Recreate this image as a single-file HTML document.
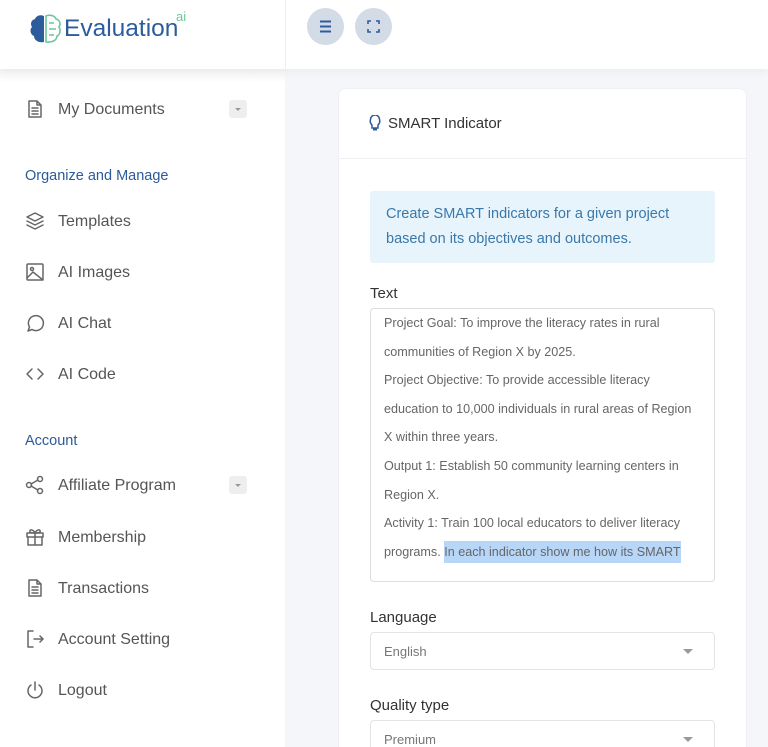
<!DOCTYPE html>
<html><head><meta charset="utf-8"><style>
*{box-sizing:border-box;margin:0;padding:0}
html,body{width:768px;height:747px;overflow:hidden}
body{background:#f5f6fa;font-family:"Liberation Sans",sans-serif;position:relative}
.top{position:absolute;left:0;top:0;width:768px;height:69px;background:#fff;box-shadow:0 2px 10px rgba(0,0,0,.05);z-index:2}
.side{position:absolute;left:0;top:69px;width:285px;height:678px;background:linear-gradient(#f3f3f3,#fff 14px)}
.vline{position:absolute;left:285px;top:0;width:1px;height:69px;background:#eee;z-index:3}
.item{position:absolute;left:25px;height:22px;display:flex;align-items:center;color:#555;font-size:16px;line-height:22px}
.item svg{display:block;width:20px;height:20px;margin-right:13px;margin-top:-3px;stroke:#666;fill:none;stroke-width:1.5;stroke-linecap:round;stroke-linejoin:round}
.sec{position:absolute;left:25px;color:#2b5a98;font-size:14.5px}
.dd{position:absolute;left:229px;width:18px;height:18px;background:#eee;border-radius:3px}
.dd:after{content:"";position:absolute;left:6px;top:8px;border:3px solid transparent;border-top-color:#999}
.btn{position:absolute;top:8px;width:37px;height:37px;border-radius:50%;background:#d3dbe7;z-index:3}
.btn svg{display:block}
.card{position:absolute;left:338px;top:88px;width:409px;height:680px;background:#fff;border-radius:8px;border:1px solid #eef0f4}
.lbl{position:absolute;left:370px;font-size:15px;color:#333}
.sel{position:absolute;left:370px;width:345px;height:38px;border:1px solid #e3e3e3;border-radius:4px;background:#fff;font-size:13px;color:#777;padding:11px 13px}
.sel:after{content:"";position:absolute;right:21px;top:16px;border:5px solid transparent;border-top-color:#999}
.z{position:absolute;z-index:3}
</style></head><body>
<div class="top"></div>
<div class="vline"></div>
<svg class="z" style="left:28px;top:13px" width="34" height="32" viewBox="0 0 34 32">
<path d="M16 3C12 1 8 3 7 6C3 7 2 11 4 14C1 17 3 22 6 23C6 27 10 30 16 29Z" fill="#2c5c9c"/>
<path d="M18 3C22 1 27 3 28 6C32 7 33 11 31 14C33 17 32 22 29 23C29 27 24 30 18 29Z" fill="none" stroke="#6cc79a" stroke-width="1.6"/>
<path d="M21 10h5M21 16h7M21 22h5" stroke="#6cc79a" stroke-width="1.4"/>
</svg>
<div class="z" style="left:64px;top:15px;font-size:24.5px;color:#2c5c9c">Evaluation</div>
<div class="z" style="left:176px;top:9px;font-size:13px;color:#6cc79a">ai</div>
<div class="btn" style="left:307px"><svg width="37" height="37" viewBox="0 0 37 37"><path d="M13 13.5h11M13 18.5h11M13 23.5h11" stroke="#2c5c9c" stroke-width="2"/></svg></div>
<div class="btn" style="left:355px"><svg width="37" height="37" viewBox="0 0 37 37" fill="none" stroke="#2c5c9c" stroke-width="1.6"><path d="M13 16v-3h3M21 13h3v3M24 21v3h-3M16 24h-3v-3"/></svg></div>
<div class="side"></div>

<div class="item" style="top:99px"><svg viewBox="0 0 20 20"><path d="M4 2h8l4 4v12H4z M12 2v4h4 M7 9h6M7 12h6M7 15h6"/></svg>My Documents</div>
<div class="dd" style="top:100px"></div>
<div class="sec" style="top:168px">Organize and Manage</div>
<div class="item" style="top:211px"><svg viewBox="0 0 20 20"><path d="M10 2l8 4-8 4-8-4z M2 10l8 4 8-4 M2 14l8 4 8-4"/></svg>Templates</div>
<div class="item" style="top:262px"><svg viewBox="0 0 20 20"><rect x="2" y="2" width="16" height="16" rx="1"/><circle cx="7" cy="7" r="1.5"/><path d="M2 16l6-6 10 8"/></svg>AI Images</div>
<div class="item" style="top:313px"><svg viewBox="0 0 20 20"><path d="M3 18l1.5-4A7.5 7.5 0 1 1 7 16.5z"/></svg>AI Chat</div>
<div class="item" style="top:364px"><svg viewBox="0 0 20 20"><path d="M7 5l-5 5 5 5M13 5l5 5-5 5"/></svg>AI Code</div>
<div class="sec" style="top:433px">Account</div>
<div class="item" style="top:475px"><svg viewBox="0 0 20 20"><circle cx="4" cy="10" r="2.5"/><circle cx="15" cy="4" r="2.5"/><circle cx="15" cy="16" r="2.5"/><path d="M6 9l7-4M6 11l7 4"/></svg>Affiliate Program</div>
<div class="dd" style="top:476px"></div>
<div class="item" style="top:527px"><svg viewBox="0 0 20 20"><rect x="2" y="6" width="16" height="4"/><path d="M3 10v8h14v-8M10 6v12M10 6C8 2 4 2 5 5c1 1 5 1 5 1c0 0 4 0 5-1c1-3-3-3-5 1"/></svg>Membership</div>
<div class="item" style="top:578px"><svg viewBox="0 0 20 20"><path d="M4 2h8l4 4v12H4z M12 2v4h4 M7 9h6M7 12h6M7 15h6"/></svg>Transactions</div>
<div class="item" style="top:629px"><svg viewBox="0 0 20 20"><path d="M8 2H3v16h5M9 10h9M15 7l3 3-3 3"/></svg>Account Setting</div>
<div class="item" style="top:680px"><svg viewBox="0 0 20 20"><path d="M10 2v8M6 5a7 7 0 1 0 8 0"/></svg>Logout</div>

<div class="card"></div>
<div style="position:absolute;left:338px;top:158px;width:409px;height:1px;background:#f0f0f0"></div>
<svg style="position:absolute;left:369px;top:115px" width="12" height="16" viewBox="0 0 12 16" fill="none" stroke="#2c5c9c" stroke-width="1.5"><path d="M3 10C1 8 1 6 1.5 4.5A4.5 4.5 0 0 1 10.5 4.5C11 6 11 8 9 10V13H3z"/><path d="M4 14.5h4" stroke-width="2"/></svg>
<div style="position:absolute;left:388px;top:115px;font-size:15px;color:#333">SMART Indicator</div>
<div style="position:absolute;left:370px;top:191px;width:345px;height:72px;background:#e8f4fc;border-radius:3px;color:#3a78aa;font-size:14.5px;line-height:25px;padding:11px 16px">Create SMART indicators for a given project based on its objectives and outcomes.</div>
<div class="lbl" style="top:285px">Text</div>
<div style="position:absolute;left:370px;top:308px;width:345px;height:274px;border:1px solid #ddd;border-radius:4px;background:#fff;font-size:12.6px;color:#666;line-height:28.6px;padding:0 13px">Project Goal: To improve the literacy rates in rural communities of Region X by 2025.<br>Project Objective: To provide accessible literacy education to 10,000 individuals in rural areas of Region X within three years.<br>Output 1: Establish 50 community learning centers in Region X.<br>Activity 1: Train 100 local educators to deliver literacy programs. <span style="background:#b8d6f8;padding:4px 0">In each indicator show me how its SMART</span></div>
<div class="lbl" style="top:609px">Language</div>
<div class="sel" style="top:632px">English</div>
<div class="lbl" style="top:697px">Quality type</div>
<div class="sel" style="top:720px">Premium</div>
</body></html>
